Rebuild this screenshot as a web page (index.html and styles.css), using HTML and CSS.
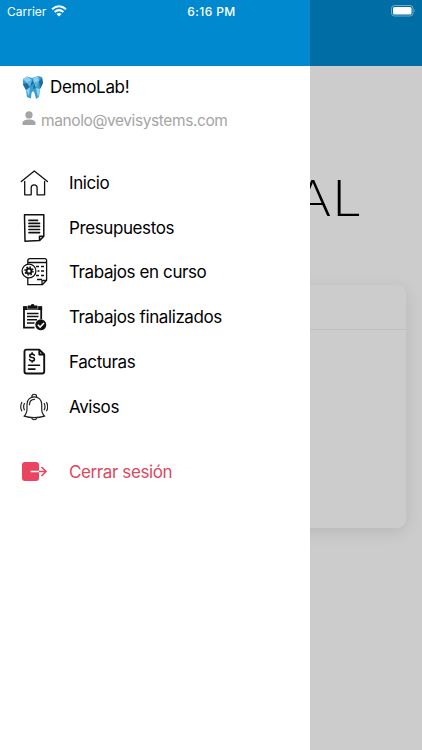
FILE: index.html
```
<!DOCTYPE html>
<html lang="es">
<head>
<meta charset="utf-8">
<title>DemoLab</title>
<link rel="stylesheet" href="styles.css">
</head>
<body>
<div class="app">
  <main class="page">
    <header class="page-bar"></header>
    <h1 class="brand">AL</h1>
    <section class="card"><div class="card-head"></div></section>
  </main>
  <div class="backdrop"></div>
  <aside class="drawer">
    <div class="drawer-bar"></div>
    <div class="account">
      <div class="lab">
        <svg class="tooth" viewBox="0 0 22 25">
          <path fill="#3b9ed1" d="M1 4L5 1.500 10 3 16 1 20 2 21 8 18 14 17 22 14 24 12.500 18 11 16 9.500 18 9 23.500 5 22 4 15 1 10Z"/>
          <path fill="#8bd1ee" d="M1 4L5 1.500 10 5 5 8ZM11 3L16 1 17 6 12 8ZM4 15L8 12 7 21ZM14 13L18 14 16 23Z"/>
          <path fill="#216c9d" d="M1 9L5 8 8 12 4 15ZM10 5L12 8 8 12ZM17 6L20 3 21 8 18 14ZM12 8L14 13 11 14Z"/>
          <path fill="#5cb6e0" d="M5 8L10 5 8 12ZM12 8L17 6 14 13Z"/>
        </svg>
        <span>DemoLab!</span>
      </div>
      <div class="mail">
        <svg class="user" viewBox="0 0 14 15" fill="#a5a5a5"><circle cx="7" cy="3.900" r="3.600"/><path d="M.5 14V12C.5 9.800 3 8.500 7 8.500s6.500 1.300 6.500 3.500v2z"/></svg>
        <span>manolo@vevisystems.com</span>
      </div>
    </div>
    <nav class="menu">
      <a class="item">
        <svg viewBox="0 0 28 28" fill="none" stroke="#111" stroke-width="1.300" stroke-linecap="round" stroke-linejoin="round"><path d="M1.300 12.500L14.300 2 27.500 12.500M4.700 12.500v13.300h6.500v-7a2.900 2.900 0 0 1 5.900 0v7h7.500V12.500"/></svg>
        <span>Inicio</span>
      </a>
      <a class="item">
        <svg viewBox="0 0 28 28" fill="none" stroke="#111" stroke-width="1.500" stroke-linejoin="round"><path d="M4.500 .8h19.300v21.500l-4.300 4.300-14.500.6zM19.500 26.600V22.300h4.300"/><path stroke-width="1.700" stroke-linecap="round" d="M9 6.400h8.500M9 9.400h10.500M9 12.400h10.500M9 15.500h10.500M9 18.600h10.500"/></svg>
        <span>Presupuestos</span>
      </a>
      <a class="item">
        <svg viewBox="0 0 28 28" fill="none" stroke="#111" stroke-width="1.300" stroke-linejoin="round"><path d="M7.800 6V2.800Q7.800.7 9.800.7h15Q26.600.7 26.600 2.700v19.500l-4.300 4.500H7.800V20M8 4.500h18.300M22 26.500V22.500h4.500"/><circle cx="9" cy="13" r="6.900"/><circle cx="9" cy="13" r="2.500" stroke-width="2"/><circle cx="9" cy="13" r="4" stroke-width="1.500" stroke-dasharray="1.500 1.640"/><path d="M16 8.500h3M21 8.500h3M17.500 13h2M21 13h3M16 17.500h3M21 17.500h3M17 21.500h5"/></svg>
        <span>Trabajos en curso</span>
      </a>
      <a class="item">
        <svg viewBox="0 0 28 28" fill="none" stroke="#111"><path stroke-width="1.800" d="M14.500 24.600H4V4.500h17.200v11.500"/><path fill="#111" stroke="none" d="M3.100 3.200h4.700V2.500h2.900a2 2 0 0 1 3.800 0h2.900v.7h4.700V7H3.100z"/><path stroke="#fff" stroke-width=".5" d="M7.400 3v3.100h10.400V3"/><path stroke-width="1.500" d="M7 10.400h11.500M7 13.600h11.500M7 16.800h10M7 20h7.500"/><circle cx="20.800" cy="21.800" r="5.500" fill="#111" stroke="none"/><path stroke="#fff" stroke-width="1.500" d="M17.800 21.800l2.300 2.300 3.900-4.200"/></svg>
        <span>Trabajos finalizados</span>
      </a>
      <a class="item">
        <svg viewBox="0 0 28 28" fill="none" stroke="#111" stroke-width="1.900" stroke-linejoin="round" stroke-linecap="round"><path d="M6.500 1.600H19.300l4.900 4.900V23.500q0 2-2 2H6.500q-2 0-2-2V3.600q0-2 2-2zM19.300 1.600v4.900h4.900"/><path stroke-width="1.600" d="M14.300 7.300q-.5-1.200-2.200-1.200c-3 0-3.200 3.200 0 3.400 3.200.3 3 3.500 0 3.500-1.800 0-2.400-1.100-2.500-1.500M12.100 4.900v1M12.100 13.100v1M8.500 17.300h11M8.500 21.100h6.500"/></svg>
        <span>Facturas</span>
      </a>
      <a class="item">
        <svg viewBox="0 0 28 28" fill="none" stroke="#222" stroke-width="1.200" stroke-linecap="round" stroke-linejoin="round"><path d="M12 3.500C11.500.5 17 .5 16.500 3.500M4 23.200q3-2.500 3-7.500V11.200C7 1.300 21.700 1.300 21.700 11.200V15.700q0 5 3 7.500-10.500 3-20.700 0zM11.500 24.500c.5 3 5 3 5.500 0M9.500 11.700q0-5.200 5-5.400M4.400 10.500q-1.600 3.200 0 6.300M1.800 9.500q-2.200 4.200 0 8.300M24.200 10.500q1.600 3.200 0 6.300M26.600 9.500q2.200 4.200 0 8.300"/></svg>
        <span>Avisos</span>
      </a>
      <a class="item logout">
        <svg viewBox="0 0 28 28"><rect x="2" y="4" width="17" height="19" rx="3" fill="#ea4460"/><path fill="none" stroke="#fff" stroke-width="1.500" d="M10.500 13.500h8.500"/><path fill="none" stroke="#ea4460" stroke-width="1.600" d="M19 13.500h7M21.500 9L26 13.500l-4.500 4.500"/></svg>
        <span>Cerrar sesión</span>
      </a>
    </nav>
  </aside>
  <div class="status">
    <div class="carrier"><span>Carrier</span>
      <svg viewBox="0 0 16 12" fill="none" stroke="#fff" stroke-width="2"><path d="M1 4.300q7-6 14 0M3.600 7q4.400-3.700 8.800 0"/><path fill="#fff" stroke="none" d="M5.500 8.900q2.500-2 5 0L8 11.500z"/></svg>
    </div>
    <span class="time">6:16 PM</span>
    <svg class="battery" viewBox="0 0 25 12"><rect x=".5" y=".5" width="21.500" height="10.500" rx="3" fill="none" stroke="#8abbd6" stroke-width=".8"/><rect x="2" y="2" width="18.500" height="7.500" rx="1.500" fill="#fff"/><path fill="#8abbd6" d="M23.300 4q1.300 1.800 0 3.600z"/></svg>
  </div>
</div>
</body>
</html>
```
FILE: styles.css
```
* { box-sizing: border-box; }
body { margin: 0; font-family: Inter, "Liberation Sans", sans-serif; color: #000; }
.app { position: relative; width: 422px; height: 750px; overflow: hidden; background: #fff; }
.page { height: 750px; display: flex; flex-direction: column; }
.page-bar, .drawer-bar { height: 65.5px; flex: none; background: #0089cf; }
.brand { margin: 101.500px 61px 0 0; height: 60px; line-height: 60px; text-align: right; font-family: Lato, sans-serif; font-weight: 300; font-size: 51px; letter-spacing: 1px; transform: scaleX(1.08); transform-origin: right; }
.card { margin: 58px 16px 0; height: 243px; border-radius: 9px; background: #fff; box-shadow: 0 4px 16px rgba(0,0,0,.1); }
.card-head { height: 45px; border-bottom: 1px solid #f2f2f2; }
.backdrop { position: absolute; inset: 0; background: rgba(0,0,0,.2); }
.drawer { position: absolute; left: 0; top: 0; width: 309.500px; height: 750px; background: #fff; }
.account { height: 95px; padding: 9px 0 0 22px; }
.lab { display: flex; align-items: center; height: 25px; gap: 6px; font-size: 17px; letter-spacing: -.3px; }
.tooth { width: 22px; height: 25px; }
.mail { display: flex; align-items: center; height: 22px; margin-top: 10px; gap: 5px; font-size: 15.500px; letter-spacing: -.4px; color: #a5a5a5; }
.user { width: 14px; height: 15px; margin-top: -4px; }
.item { display: flex; align-items: center; height: 44.800px; padding-left: 20px; gap: 21px; font-size: 17px; letter-spacing: -.4px; white-space: nowrap; }
.item svg { width: 28px; height: 28px; flex: none; }
.logout { margin-top: 20px; color: #dc4860; }
.status { position: absolute; inset: 0 0 auto; height: 22px; padding: 0 6px 0 7px; display: grid; grid-template-columns: 1fr auto 1fr; align-items: center; color: #fff; font-size: 12px; }
.carrier { display: flex; align-items: center; gap: 5px; }
.carrier svg { width: 16px; height: 12px; }
.time { font-weight: 500; letter-spacing: .4px; }
.battery { width: 25px; height: 12px; justify-self: end; }
```
